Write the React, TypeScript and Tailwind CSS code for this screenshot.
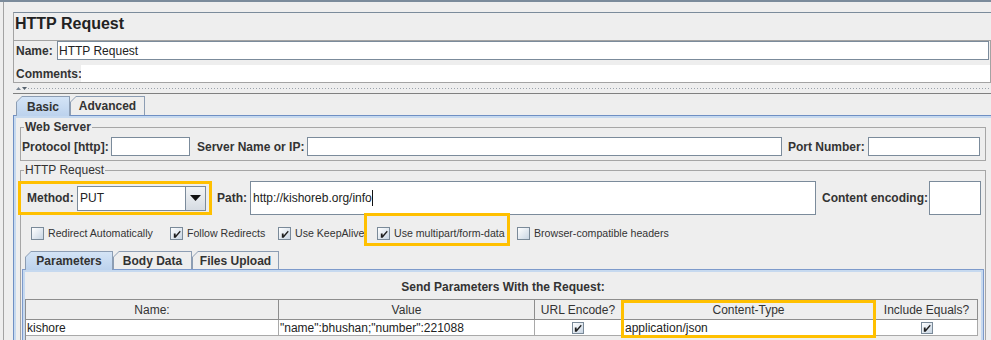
import React from 'react'

function Check({ checked = false, small = false }: { checked?: boolean; small?: boolean }) {
  return (
    <span
      className={`${small ? 'h-[12px] w-[12px]' : 'h-[13px] w-[13px]'} inline-flex shrink-0 items-center justify-center border border-[#7a8a99] bg-linear-to-br from-white to-[#c8d5e3]`}
    >
      {checked && (
        <svg viewBox="0 0 11 11" className="h-[10px] w-[10px]">
          <path d="M2 5h2v2.2L8.6 2 9.6 3 4 9.5H2z" fill="#1e1e1e" />
        </svg>
      )}
    </span>
  )
}

function Tab({ label, width, selected = false, small = false }: { label: string; width: string; selected?: boolean; small?: boolean }) {
  const h = small ? (selected ? 'relative z-10 -mb-px h-[19px]' : 'h-[18px]') : selected ? 'relative z-10 -mb-px h-[20px]' : 'h-[19px]'
  return (
    <div className={`${width} ${h} shrink-0 bg-[#8c9db3] px-px pt-px [clip-path:polygon(6px_0,100%_0,100%_100%,0_100%,0_6px)]`}>
      <div
        className={`flex h-full items-center justify-center text-[12px] font-bold text-[#333] [clip-path:polygon(5px_0,100%_0,100%_100%,0_100%,0_5px)] ${
          selected ? 'bg-linear-to-b from-[#d4e4f6] to-[#bcd2ed]' : 'bg-[#eeeeee]'
        }`}
      >
        {label}
      </div>
    </div>
  )
}

function Group({ title, bold = false, className, children }: { title: string; bold?: boolean; className: string; children: React.ReactNode }) {
  return (
    <div className={`relative border border-[#a6a6a6] ${className}`}>
      <span className={`absolute -top-[8px] left-[3px] bg-[#eeeeee] px-px text-[12px] leading-[14px] text-[#333] ${bold ? 'font-bold' : ''}`}>
        {title}
      </span>
      {children}
    </div>
  )
}

const field = 'border border-[#7b8b9b] bg-white'

export default function App() {
  const cols = 'grid grid-cols-[253px_256px_87px_254px_102px]'
  const headers = ['Name:', 'Value', 'URL Encode?', 'Content-Type', 'Include Equals?']

  return (
    <div className="h-[340px] w-[991px] overflow-hidden bg-[#eeeeee] font-['Liberation_Sans',Arial,sans-serif] text-[#333]">
      <div className="h-[2px] bg-[#7b8b9b]" />
      <div className="flex h-[338px]">
        {/* left gutter */}
        <div className="w-[13px] shrink-0 pl-[3px]">
          <div className="h-full w-px bg-[#a3a3a3]" />
        </div>

        <div className="min-w-0 flex-1">
          <div className="h-[10px]" />

          {/* title + name/comments */}
          <div className="border-l border-t border-l-[#a3a3a3] border-t-[#7b8b9b]">
            <div className="h-[27px] pl-px pt-[2px] text-[16px] font-bold leading-[18px] text-[#222]">HTTP Request</div>
            <div className="border-b border-r border-t border-[#a3a3a3]">
              <div className="flex h-[19px] items-center">
                <span className="w-[43px] pl-[2px] text-[12px] font-bold">Name:</span>
                <div className={`${field} flex h-[19px] w-[932px] items-center pl-px text-[12px] text-[#222]`}>HTTP Request</div>
              </div>
              <div className="flex h-[22px] items-end">
                <span className="flex h-[17px] w-[67px] items-center pl-[2px] text-[12px] font-bold">Comments:</span>
                <div className="h-[17px] flex-1 bg-white" />
              </div>
            </div>
          </div>

          {/* splitter */}
          <div className="flex h-[11px] items-center border-b border-[#808080] pl-[3px]">
            <svg width="11" height="5" viewBox="0 0 11 5">
              <path d="M0 4 L2.5 1 L5 4 Z" fill="#7a8795" />
              <path d="M6 1 L11 1 L8.5 4 Z" fill="#55616d" />
            </svg>
            <div className="ml-px h-px flex-1 bg-[repeating-linear-gradient(90deg,#9aa2ab_0px,#9aa2ab_1px,transparent_1px,transparent_3px)]" />
          </div>

          {/* main tabs */}
          <div className="flex h-[21px] items-end pl-[3px]">
            <Tab label="Basic" width="w-[54px]" selected />
            <Tab label="Advanced" width="w-[75px]" />
          </div>

          <div className="border-l border-t border-[#6f8fc3]">
            <div className="border-l-2 border-t-2 border-[#c6d9ef]">
              <Group title="Web Server" bold className="ml-[4px] mt-[9px] h-[34px] w-[966px]">
                <div className="mt-[9px] flex h-[19px] items-center pl-px text-[12px]">
                  <span className="w-[89px] font-bold">Protocol [http]:</span>
                  <div className={`${field} h-[19px] w-[79px]`} />
                  <span className="w-[117px] pl-[7px] font-bold">Server Name or IP:</span>
                  <div className={`${field} h-[19px] w-[475px]`} />
                  <span className="w-[86px] pl-[6px] font-bold">Port Number:</span>
                  <div className={`${field} h-[19px] w-[112px]`} />
                </div>
              </Group>

              <Group title="HTTP Request" className="ml-[4px] mt-[9px] h-[200px] w-[966px]">
                {/* method / path row */}
                <div className="relative mt-[10px] flex h-[34px] items-center text-[12px]">
                  <span className="w-[56px] pl-[6px] font-bold">Method:</span>
                  <div className="flex h-[25px] w-[129px] border border-[#7b8b9b] bg-white">
                    <div className="flex flex-1 items-center pl-[2px] text-[#222]">PUT</div>
                    <div className="flex w-[20px] items-center justify-center border-l border-[#7b8b9b] bg-linear-to-b from-[#f2f4f6] to-[#d6dce3]">
                      <svg width="11" height="6" viewBox="0 0 11 6">
                        <path d="M0 0 H11 L5.5 6 Z" fill="#111" />
                      </svg>
                    </div>
                  </div>
                  <span className="w-[44px] pl-[11px] font-bold">Path:</span>
                  <div className={`${field} flex h-[34px] w-[566px] items-center pl-[2px] text-[#222]`}>
                    <span>http://kishoreb.org/info</span>
                    <span className="inline-block h-[16px] w-px bg-[#111]" />
                  </div>
                  <span className="w-[113px] pl-[6px] font-bold">Content encoding:</span>
                  <div className={`${field} h-[34px] w-[52px]`} />
                  <div className="pointer-events-none absolute -left-[3px] top-0 h-[34px] w-[194px] border-[3px] border-[#ffc000]" />
                </div>

                {/* options */}
                <div className="mt-[12px] flex h-[13px] items-center pl-[10px] text-[10.6px]">
                  <div className="flex w-[139px] items-center gap-[4px]">
                    <Check />
                    <span>Redirect Automatically</span>
                  </div>
                  <div className="flex w-[108px] items-center gap-[4px]">
                    <Check checked />
                    <span>Follow Redirects</span>
                  </div>
                  <div className="flex w-[99px] items-center gap-[4px]">
                    <Check checked />
                    <span>Use KeepAlive</span>
                  </div>
                  <div className="relative flex w-[140px] items-center gap-[4px]">
                    <Check checked />
                    <span>Use multipart/form-data</span>
                    <div className="pointer-events-none absolute -left-[13px] -top-[13px] h-[33px] w-[146px] border-[3px] border-[#ffc000]" />
                  </div>
                  <div className="flex items-center gap-[4px]">
                    <Check />
                    <span>Browser-compatible headers</span>
                  </div>
                </div>

                {/* parameters */}
                <div className="ml-px mt-[11px]">
                  <div className="flex h-[18px] items-end pl-[3px]">
                    <Tab label="Parameters" width="w-[88px]" selected small />
                    <Tab label="Body Data" width="w-[79px]" small />
                    <Tab label="Files Upload" width="w-[87px]" small />
                  </div>
                  <div className="w-[962px] border-l border-r border-t border-[#7d9acb]">
                    <div className="border-l-2 border-r-2 border-t-2 border-[#c6d9ef]">
                      <div className="flex h-[27px] items-center justify-center pt-[3px] text-[12px] font-bold">
                        Send Parameters With the Request:
                      </div>
                      <div className="relative w-[953px] border-l border-t border-[#8d8d8d] text-[12px]">
                        <div className={cols}>
                          {headers.map((h) => (
                            <div key={h} className="flex h-[20px] items-center justify-center border-b border-r border-[#8d8d8d] bg-[#eeeeee]">
                              {h}
                            </div>
                          ))}
                        </div>
                        <div className={`${cols} text-[#222]`}>
                          <div className="flex h-[16px] items-center border-b border-r border-[#a9a9a9] bg-white pl-px">kishore</div>
                          <div className="flex h-[16px] items-center border-b border-r border-[#a9a9a9] bg-white pl-px">
                            "name":bhushan;"number":221088
                          </div>
                          <div className="flex h-[16px] items-center justify-center border-b border-r border-[#a9a9a9] bg-white">
                            <Check checked small />
                          </div>
                          <div className="flex h-[16px] items-center border-b border-r border-[#a9a9a9] bg-white pl-[3px]">application/json</div>
                          <div className="flex h-[16px] items-center justify-center border-b border-r border-[#a9a9a9] bg-white">
                            <Check checked small />
                          </div>
                        </div>
                        <div className="h-[20px]" />
                        <div className="pointer-events-none absolute left-[595px] top-0 h-[38px] w-[255px] border-[3px] border-[#ffc000]" />
                      </div>
                    </div>
                  </div>
                </div>
              </Group>
            </div>
          </div>
        </div>
      </div>
    </div>
  )
}
